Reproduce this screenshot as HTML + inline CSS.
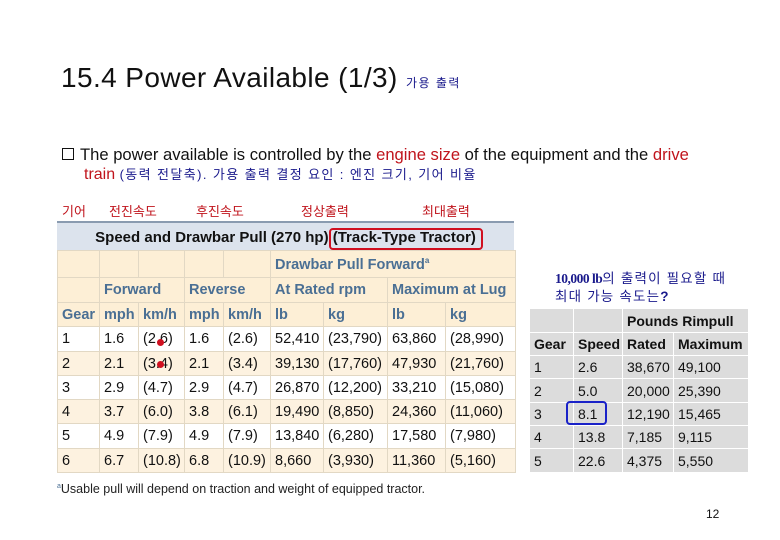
<!DOCTYPE html>
<html><head><meta charset="utf-8"><style>
body{margin:0;width:780px;height:540px;background:#fff;position:relative;overflow:hidden;font-family:"Liberation Sans","Noto Sans CJK KR",sans-serif}
.a{position:absolute;white-space:nowrap}
table{border-collapse:collapse;table-layout:fixed;position:absolute}
td{padding:0 0 0 4px;white-space:nowrap;overflow:hidden;font-size:14.5px}
#t1 td{border:1px solid #e2d8c4;color:#111}
#t1 .h td{background:#fdefd6;color:#4a6f94;font-weight:bold}
#t1 .w td{background:#fff}
#t1 .c td{background:#fdf2e0}
#t2 td{border:1px solid #fff;background:#dcdcdc;color:#111;font-size:14px}
#t2 .h td{font-weight:bold}
.kr{color:#1a1a8c;font-family:"Liberation Sans","Noto Sans CJK KR",sans-serif}
</style></head><body>
<div class="a" style="left:61px;top:62px;font-size:28px;color:#111;font-family:'Liberation Sans','Noto Sans CJK KR',sans-serif;letter-spacing:0.4px">15.4 Power Available (1/3) <span class="kr" style="font-size:12px;letter-spacing:1.5px">가용 출력</span></div>
<div class="a" style="left:62px;top:145px;font-size:16.6px;color:#111"><span style="display:inline-block;width:10px;height:10px;border:1.5px solid #111;vertical-align:0px;margin-right:6px"></span>The power available is controlled by the <span style="color:#c0141c">engine size</span> of the equipment and the <span style="color:#c0141c">drive</span></div>
<div class="a" style="left:84px;top:164px;font-size:16px;color:#c0141c">train <span class="kr" style="font-size:13px;letter-spacing:1.4px">(동력 전달축). 가용 출력 결정 요인 : 엔진 크기, 기어 비율</span></div>
<div class="a" style="left:62px;top:201px;font-size:13px;color:#c0141c">기어</div>
<div class="a" style="left:109px;top:201px;font-size:13px;color:#c0141c">전진속도</div>
<div class="a" style="left:196px;top:201px;font-size:13px;color:#c0141c">후진속도</div>
<div class="a" style="left:301px;top:201px;font-size:13px;color:#c0141c">정상출력</div>
<div class="a" style="left:422px;top:201px;font-size:13px;color:#c0141c">최대출력</div>

<div class="a" style="left:57px;top:221px;width:457px;height:29px;background:#dce3ed;border-top:2px solid #8a9bb0;box-sizing:border-box;font-weight:bold;font-size:15px;text-align:center;line-height:30px;color:#111">Speed and Drawbar Pull (270 hp) (Track-Type Tractor)</div>
<div class="a" style="left:329px;top:228px;width:154px;height:22px;border:2.5px solid #d01020;border-radius:4px;box-sizing:border-box"></div>

<table id="t1" style="left:57px;top:250px;width:458px">
<colgroup><col style="width:42px"><col style="width:39px"><col style="width:46px"><col style="width:39px"><col style="width:47px"><col style="width:53px"><col style="width:64px"><col style="width:58px"><col style="width:70px"></colgroup>
<tr class="h" style="height:27px"><td></td><td></td><td></td><td></td><td></td><td colspan="4">Drawbar Pull Forward<sup style="font-size:8px">a</sup></td></tr>
<tr class="h" style="height:25px"><td></td><td colspan="2">Forward</td><td colspan="2">Reverse</td><td colspan="2">At Rated rpm</td><td colspan="2">Maximum at Lug</td></tr>
<tr class="h" style="height:24px"><td>Gear</td><td>mph</td><td>km/h</td><td>mph</td><td>km/h</td><td>lb</td><td>kg</td><td>lb</td><td>kg</td></tr>
<tr class="w" style="height:25px"><td>1</td><td>1.6</td><td>(2.6)</td><td>1.6</td><td>(2.6)</td><td>52,410</td><td>(23,790)</td><td>63,860</td><td>(28,990)</td></tr>
<tr class="c" style="height:24px"><td>2</td><td>2.1</td><td>(3.4)</td><td>2.1</td><td>(3.4)</td><td>39,130</td><td>(17,760)</td><td>47,930</td><td>(21,760)</td></tr>
<tr class="w" style="height:24px"><td>3</td><td>2.9</td><td>(4.7)</td><td>2.9</td><td>(4.7)</td><td>26,870</td><td>(12,200)</td><td>33,210</td><td>(15,080)</td></tr>
<tr class="c" style="height:24px"><td>4</td><td>3.7</td><td>(6.0)</td><td>3.8</td><td>(6.1)</td><td>19,490</td><td>(8,850)</td><td>24,360</td><td>(11,060)</td></tr>
<tr class="w" style="height:25px"><td>5</td><td>4.9</td><td>(7.9)</td><td>4.9</td><td>(7.9)</td><td>13,840</td><td>(6,280)</td><td>17,580</td><td>(7,980)</td></tr>
<tr class="c" style="height:24px"><td>6</td><td>6.7</td><td>(10.8)</td><td>6.8</td><td>(10.9)</td><td>8,660</td><td>(3,930)</td><td>11,360</td><td>(5,160)</td></tr>
</table>
<div class="a" style="left:157px;top:339px;width:7px;height:7px;border-radius:50%;background:#d01020"></div>
<div class="a" style="left:157px;top:361px;width:7px;height:7px;border-radius:50%;background:#d01020"></div>
<div class="a" style="left:57px;top:482px;font-size:12.5px;color:#222"><sup style="font-size:7px;color:#4a6f94">a</sup>Usable pull will depend on traction and weight of equipped tractor.</div>

<div class="a kr" style="left:555px;top:270px;font-size:13.5px;line-height:18px;letter-spacing:1.2px"><b style="font-family:'Liberation Serif',serif;letter-spacing:-0.5px">10,000 lb</b>의 출력이 필요할 때<br>최대 가능 속도는<b>?</b></div>

<table id="t2" style="left:529px;top:308px;width:219px">
<colgroup><col style="width:44px"><col style="width:49px"><col style="width:51px"><col style="width:75px"></colgroup>
<tr class="h" style="height:24px"><td></td><td></td><td colspan="2">Pounds Rimpull</td></tr>
<tr class="h" style="height:23px"><td>Gear</td><td>Speed</td><td>Rated</td><td>Maximum</td></tr>
<tr style="height:23px"><td>1</td><td>2.6</td><td>38,670</td><td>49,100</td></tr>
<tr style="height:24px"><td>2</td><td>5.0</td><td>20,000</td><td>25,390</td></tr>
<tr style="height:23px"><td>3</td><td>8.1</td><td>12,190</td><td>15,465</td></tr>
<tr style="height:23px"><td>4</td><td>13.8</td><td>7,185</td><td>9,115</td></tr>
<tr style="height:24px"><td>5</td><td>22.6</td><td>4,375</td><td>5,550</td></tr>
</table>
<div class="a" style="left:566px;top:401px;width:41px;height:24px;border:2.5px solid #1a22c8;border-radius:4px;box-sizing:border-box"></div>

<div class="a" style="left:706px;top:507px;font-size:12px;color:#111">12</div>
</body></html>
